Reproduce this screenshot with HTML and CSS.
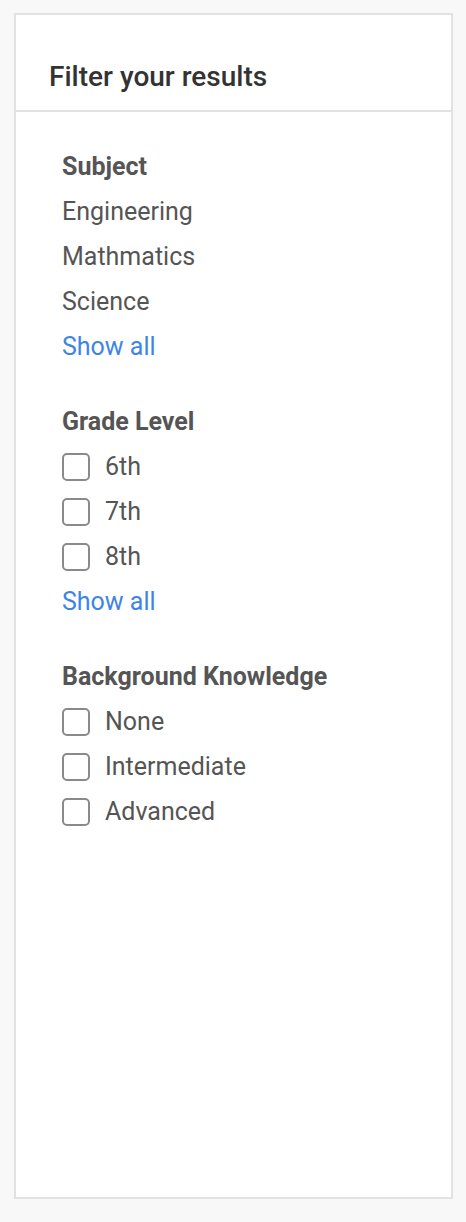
FILE: index.html
```html
<!DOCTYPE html>
<html lang="en">
<head>
    <meta charset="UTF-8">
    <meta name="viewport" content="width=device-width, initial-scale=1.0">
    <title>Filter your results</title>
    <link rel="stylesheet" href="styles.css">
</head>
<body>
    <div class="filter-card">
        <div class="filter-header">
            <h2>Filter your results</h2>
        </div>
        <div class="filter-body">
            <div class="filter-group">
                <h3>Subject</h3>
                <ul class="plain-list">
                    <li>Engineering</li>
                    <li>Mathmatics</li>
                    <li>Science</li>
                </ul>
                <a href="#" class="show-all">Show all</a>
            </div>
            <div class="filter-group">
                <h3>Grade Level</h3>
                <label class="check-row"><input type="checkbox"><span class="box"></span>6th</label>
                <label class="check-row"><input type="checkbox"><span class="box"></span>7th</label>
                <label class="check-row"><input type="checkbox"><span class="box"></span>8th</label>
                <a href="#" class="show-all">Show all</a>
            </div>
            <div class="filter-group">
                <h3>Background Knowledge</h3>
                <label class="check-row"><input type="checkbox"><span class="box"></span>None</label>
                <label class="check-row"><input type="checkbox"><span class="box"></span>Intermediate</label>
                <label class="check-row"><input type="checkbox"><span class="box"></span>Advanced</label>
            </div>
        </div>
    </div>
</body>
</html>
```

FILE: styles.css
```css
body {
    margin: 0;
    padding: 13px 13px 21px 14px;
    background: #f8f8f8;
    font-family: Roboto, "Liberation Sans", Arial, sans-serif;
    color: #555;
}
.filter-card {
    height: 1186px;
    box-sizing: border-box;
    background: #fff;
    border: 2px solid #e2e2e2;
}
.filter-header {
    height: 97px;
    box-sizing: border-box;
    padding: 46px 0 0 33px;
    border-bottom: 2px solid #e2e2e2;
}
.filter-header h2 {
    margin: 0;
    font-size: 28px;
    font-weight: 500;
    line-height: 32px;
    color: #333;
}
.filter-body {
    padding: 32px 0 0 46px;
}
.filter-group {
    margin-bottom: 30px;
}
.filter-group h3 {
    margin: 0;
    font-size: 25px;
    font-weight: 700;
    line-height: 45px;
    color: #555;
}
.plain-list {
    list-style: none;
    margin: 0;
    padding: 0;
}
.plain-list li {
    font-size: 25px;
    line-height: 45px;
}
.show-all {
    display: block;
    font-size: 25px;
    line-height: 45px;
    color: #3d85e4;
    text-decoration: none;
}
.check-row {
    display: flex;
    align-items: center;
    height: 45px;
    font-size: 25px;
    cursor: pointer;
}
.check-row input {
    display: none;
}
.box {
    width: 28px;
    height: 28px;
    box-sizing: border-box;
    border: 2px solid #8a8a8a;
    border-radius: 5px;
    margin-right: 15px;
}
```
